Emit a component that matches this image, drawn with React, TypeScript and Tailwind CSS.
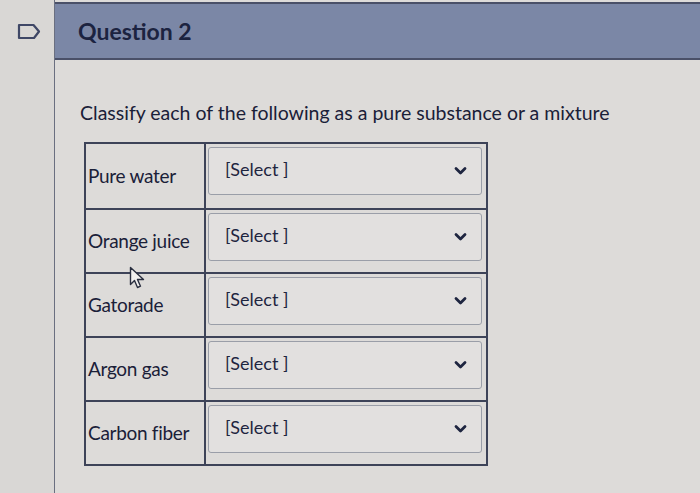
import React from 'react';

const rows = ['Pure water', 'Orange juice', 'Gatorade', 'Argon gas', 'Carbon fiber'];

const Chevron = () => (
  <svg className="h-[10px] w-[13px]" viewBox="0 0 13 10" fill="none">
    <path d="M2 2.5l4.5 4.5L11 2.5" stroke="#1e2540" strokeWidth={2.8} strokeLinecap="round" strokeLinejoin="round" />
  </svg>
);

const SelectBox = () => (
  <div className="flex h-[48px] items-center justify-between rounded-[3px] border border-[#9a9ea8] bg-[#e2e0df] pl-[16px] pr-[14px]">
    <span className="-mt-[4px] text-[18px] text-[#1e2540]">[Select ]</span>
    <Chevron />
  </div>
);

export default function App() {
  return (
    <div
      className="relative flex h-[493px] w-[700px] overflow-hidden bg-[#dddbd9] text-[#1e2540]"
      style={{ fontFamily: 'Lato, "Open Sans", sans-serif' }}
    >
      {/* left rail */}
      <div className="flex w-[55px] shrink-0 justify-center border-r-[1.5px] border-[#6a6f80] bg-[#d9d7d5] pt-[23px]">
        <svg className="ml-[4px] h-[17px] w-[25px]" viewBox="0 0 25 17" fill="none">
          <path d="M2 2h14.5l5.5 6.5-5 6.5H2z" stroke="#3f4766" strokeWidth={2.2} strokeLinejoin="round" />
        </svg>
      </div>

      {/* question panel */}
      <div className="flex flex-1 flex-col pt-[2px]">
        <div className="flex h-[58px] items-center border-y-2 border-[#4a5068] bg-[#7b87a6] pl-[23px]">
          <h2 className="text-[23px] font-bold text-[#1c2340]">Question 2</h2>
        </div>

        <div className="pl-[25px] pt-[41px]">
          <p className="text-[19.5px] leading-[24px] text-[#1a2038]">
            Classify each of the following as a pure substance or a mixture
          </p>

          <div className="mt-[17px] ml-[4px] w-[404px] border-2 border-[#3d4358]">
            {rows.map((label, i) => (
              <div
                key={label}
                className={`flex h-[64px] ${i > 0 ? 'border-t-2 border-[#3d4358]' : ''}`}
              >
                <div className="flex w-[120px] shrink-0 items-center border-r-2 border-[#3d4358] pl-[2px]">
                  <span className="text-[19px] tracking-[-0.3px] text-[#1a2038]">{label}</span>
                </div>
                <div className="flex-1 pl-[2px] pr-[4px] pt-[3px]">
                  <SelectBox />
                </div>
              </div>
            ))}
          </div>
        </div>
      </div>

      {/* mouse pointer */}
      <svg className="absolute left-[129px] top-[266px] h-[24px] w-[18px]" viewBox="0 0 18 24" fill="none">
        <path
          d="M1.5 1.5v17l4-4 3 7 3-1.3-3-6.7h6z"
          fill="#f2f1f0"
          stroke="#2a2f40"
          strokeWidth={1.4}
          strokeLinejoin="round"
        />
      </svg>
    </div>
  );
}
